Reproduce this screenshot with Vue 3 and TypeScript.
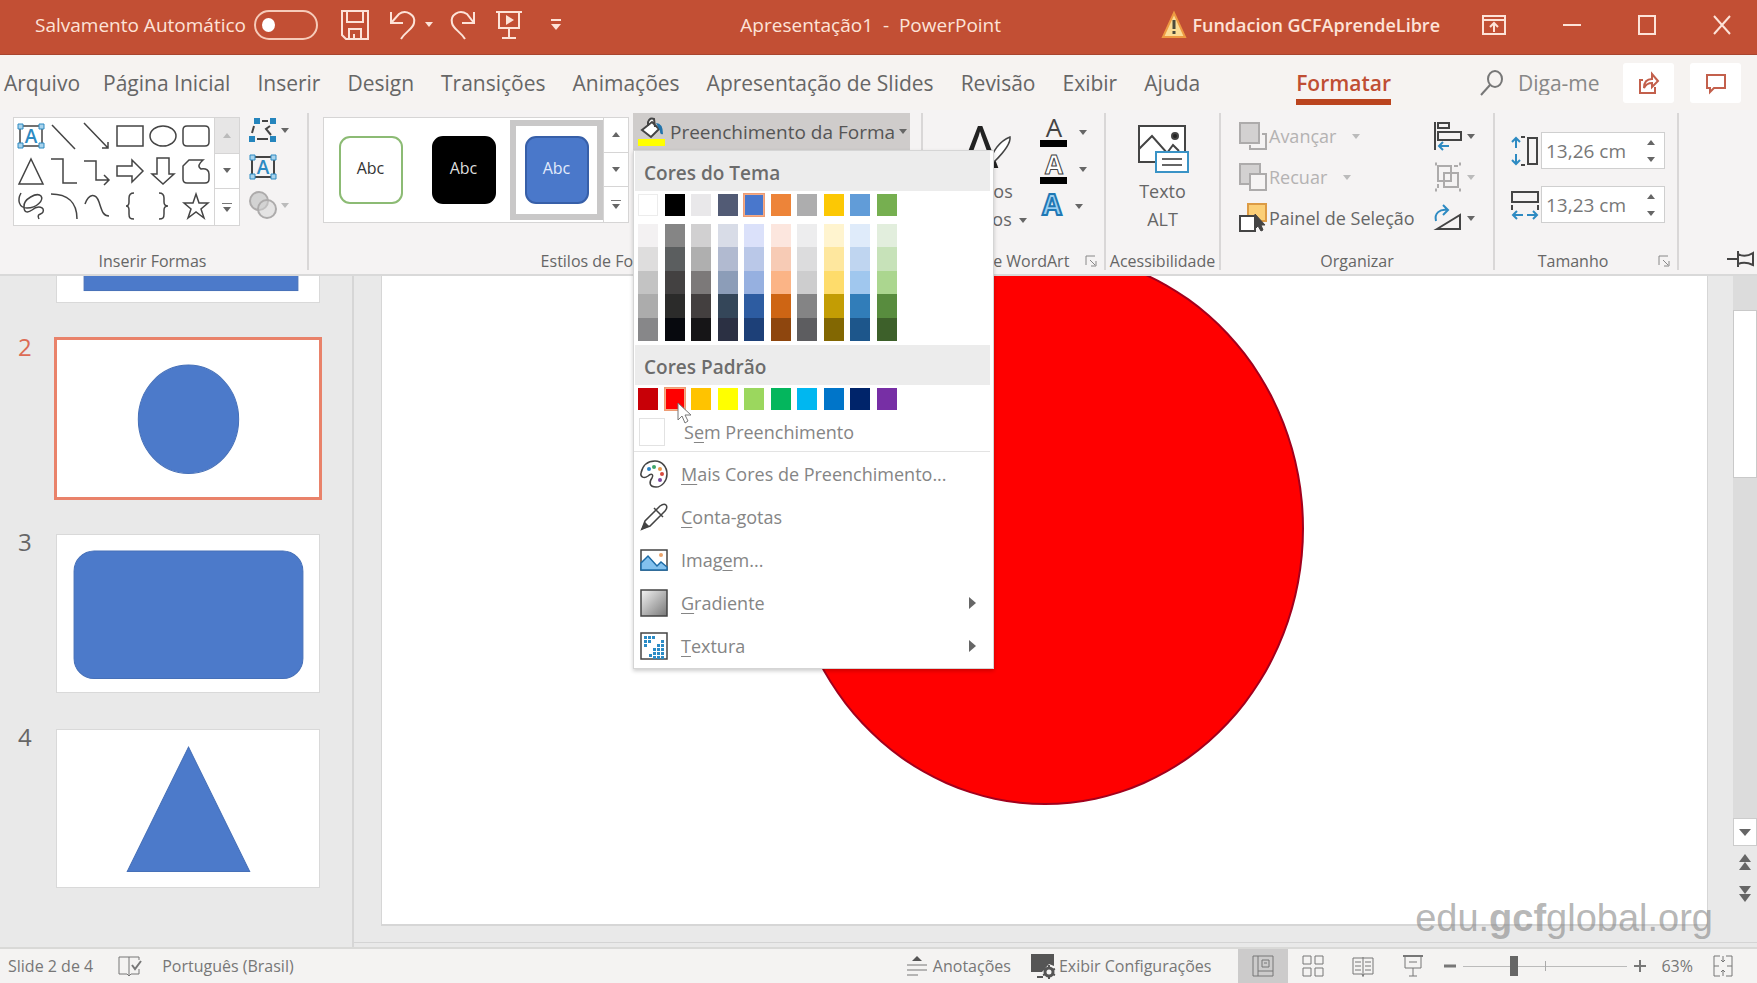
<script setup lang="ts">
import { ref } from 'vue'

interface Tab { name: string; active?: boolean }
interface MenuItem { id: string; pre: string; key: string; post: string; sub?: boolean }

const tabs: Tab[] = [
  { name: 'Arquivo' },
  { name: 'Página Inicial' },
  { name: 'Inserir' },
  { name: 'Design' },
  { name: 'Transições' },
  { name: 'Animações' },
  { name: 'Apresentação de Slides' },
  { name: 'Revisão' },
  { name: 'Exibir' },
  { name: 'Ajuda' },
  { name: 'Formatar', active: true },
]

const shapes: string[] = [
  '',
  'M2 3 25 27',
  'M1 1 25 26M25 20v6h-6',
  'M1 4h26v20H1z',
  'M1 14a13 10 0 1 0 26 0a13 10 0 1 0-26 0',
  'M5 4h18q4 0 4 4v12q0 4-4 4H5q-4 0-4-4V8q0-4 4-4z',
  'M14 2 26 27H2z',
  'M1 2h12v24h14',
  'M1 4h12v19h13M21 18l5 5-5 5',
  'M1 9h15V3l11 11-11 11v-6H1z',
  'M8 1h12v16h5L14 27 3 17h5z',
  'M7 3h14q-7 6-2 9 8-1 8 5v5q0 4-4 4H5q-4 0-4-4V9z',
  'M4 1C0 8 2 16 10 16c10 0 17-8 14-12C20 0 6 7 7 15c0 6 4 6 8 3 6-5 13-3 11 2-1 3-7 1-4 7',
  'M1 2c16 0 26 8 26 25',
  'M2 12C6 1 13 1 16 10s4 14 10 14',
  'M18 1c-4 0-5 2-5 5v4q0 4-3 4 3 0 3 4v4c0 4 1 5 5 5',
  'M10 1c4 0 5 2 5 5v4q0 4 4 4-4 0-4 4v4c0 4-1 5-5 5',
  'M14 2l3 9h9l-7 6 3 9-8-6-8 6 3-9-7-6h9z',
]

const themeColors: string[][] = [
  ['#ffffff', '#f3f1f2', '#dedddd', '#c3c3c3', '#acacac', '#878789'],
  ['#000000', '#858585', '#5b5e5f', '#434141', '#2b2b2a', '#07090e'],
  ['#e9e8ea', '#d1d0d1', '#afafaf', '#7c7979', '#433f3f', '#161517'],
  ['#525b75', '#d8dce7', '#b1bad0', '#8c9db8', '#344659', '#2b3043'],
  ['#4977cc', '#dbe1fa', '#bac8e8', '#96b0e0', '#2d5ca1', '#1d4078'],
  ['#ed8439', '#fce6de', '#f7cbb5', '#fbb486', '#ce6514', '#8e460e'],
  ['#adadae', '#ededee', '#dcdcdd', '#cdcdce', '#848485', '#5d5d60'],
  ['#fcc804', '#fff4cf', '#fee79e', '#fedc6b', '#c39d04', '#826702'],
  ['#619cd8', '#dfebfa', '#bfd5f0', '#a0c7ee', '#317db9', '#1d568b'],
  ['#76af50', '#e2eedd', '#c7e2b9', '#abd68f', '#588c3e', '#3d602a'],
]
const selectedTheme = 4

const standardColors: string[] = [
  '#c80007', '#ff0000', '#ffc300', '#ffff00', '#9bd75e',
  '#04b65d', '#00b7f0', '#0075c9', '#00246a', '#772fa5',
]
const selectedStandard = 1

const menuItems: MenuItem[] = [
  { id: 'palette', pre: '', key: 'M', post: 'ais Cores de Preenchimento...' },
  { id: 'dropper', pre: '', key: 'C', post: 'onta-gotas' },
  { id: 'image', pre: 'Imag', key: 'e', post: 'm...' },
  { id: 'gradient', pre: '', key: 'G', post: 'radiente', sub: true },
  { id: 'texture', pre: '', key: 'T', post: 'extura', sub: true },
]

const textureDots: number[][] = [
  [4, 4], [8, 4], [12, 4], [4, 8], [8, 8], [4, 12], [21, 8], [21, 12], [17, 12],
  [21, 16], [17, 16], [13, 16], [21, 20], [17, 20], [13, 20], [9, 22], [21, 24], [17, 24], [13, 24],
]

const slides: number[] = [1, 2, 3, 4]
const currentSlide = ref(2)
const autosave = ref(false)
const height = ref('13,26 cm')
const width = ref('13,23 cm')
const zoom = ref(30)
</script>

<template>
  <div class="app">
    <header class="titlebar">
      <label class="autosave">
        <span>Salvamento Automático</span>
        <input v-model="autosave" type="checkbox" role="switch" class="switch" />
      </label>
      <div class="quick">
        <button aria-label="Salvar">
          <svg width="28" height="30" viewBox="0 0 28 30"><path d="M1 1h26v28H5l-4-4zM6 1v11h16V1M8 29V19h12v10M13 29v-5" /></svg>
        </button>
        <button class="undo" aria-label="Desfazer">
          <svg width="28" height="30" viewBox="0 0 28 30"><path d="M2 2v11h12M2 13 10 4c7-5 17 1 15 9-1 6-8 8-13 16" /></svg>
          <i class="caret"></i>
        </button>
        <button aria-label="Refazer">
          <svg width="28" height="30" viewBox="0 0 28 30"><path d="M25 2v11H13M25 13 18 4C10-1 1 5 3 13c1 6 8 8 13 16" /></svg>
        </button>
        <button aria-label="Do começo">
          <svg width="28" height="30" viewBox="0 0 28 30"><path d="M1 2h26M4 2v16h20V2M14 18v10M7 28h14" /><path class="solid" d="M11 5l8 5-8 5z" /></svg>
        </button>
        <button class="more" aria-label="Personalizar">
          <svg width="10" height="12" viewBox="0 0 10 12"><path d="M0 1h10" /><path class="solid" d="M0 5h10l-5 6z" /></svg>
        </button>
      </div>
      <h1>Apresentação1&nbsp; -&nbsp; PowerPoint</h1>
      <div class="account">
        <svg width="24" height="28" viewBox="0 0 24 28"><path d="M12 2 23 26H1z" fill="#fbdc94" stroke="#ee9a42" stroke-width="2" /><path d="M12 9v9M12 20v3" stroke="#4b4a3c" stroke-width="3" /></svg>
        <span>Fundacion GCFAprendeLibre</span>
      </div>
      <div class="window">
        <button aria-label="Opções da faixa"><svg width="24" height="20" viewBox="0 0 24 20"><path d="M1 1h22v18H1zM1 5h22M12 17V8M8 12l4-4 4 4" /></svg></button>
        <button aria-label="Minimizar"><svg width="18" height="20" viewBox="0 0 18 20"><path d="M0 10h18" /></svg></button>
        <button aria-label="Maximizar"><svg width="18" height="20" viewBox="0 0 18 20"><path d="M1 1h16v18H1z" /></svg></button>
        <button aria-label="Fechar"><svg width="18" height="20" viewBox="0 0 18 20"><path d="M1 1l16 18M17 1 1 19" /></svg></button>
      </div>
    </header>

    <nav class="tabs">
      <button v-for="t in tabs" :key="t.name" class="tab" :class="{ active: t.active }">{{ t.name }}</button>
      <label class="search">
        <svg width="24" height="26" viewBox="0 0 24 26"><ellipse cx="15" cy="9" rx="7" ry="8" /><path d="M10 15 1 25" /></svg>
        <input type="text" placeholder="Diga-me" aria-label="Diga-me" />
      </label>
      <button class="card-btn" aria-label="Compartilhar">
        <svg width="20" height="22" viewBox="0 0 20 22"><path d="M4 8H1v13h15v-6M5 16c0-7 4-9 8-9V2l6 7-6 6v-4c-4 0-6 1-8 5z" /></svg>
      </button>
      <button class="card-btn" aria-label="Comentários">
        <svg width="20" height="22" viewBox="0 0 20 22"><path d="M1 3h18v13H8l-4 4v-4H1z" /></svg>
      </button>
    </nav>

    <section class="ribbon">
      <div class="group g-shapes">
        <div class="body">
          <div class="gallery">
            <div class="shape-grid">
              <button v-for="(d, i) in shapes" :key="i" :aria-label="'Forma ' + (i + 1)">
                <svg v-if="i === 0" width="28" height="28" viewBox="0 0 28 28">
                  <path d="M3 4h22v20H3z" /><text x="14" y="21" class="blue-a">A</text>
                  <path class="dots" d="M1 2h5v5H1zM22 2h5v5h-5zM1 21h5v5H1zM22 21h5v5h-5z" />
                </svg>
                <svg v-else width="28" height="28" viewBox="0 0 28 28"><path :d="d" /></svg>
              </button>
            </div>
            <div class="scroller">
              <button class="off" aria-label="Linha acima"><i class="caret up"></i></button>
              <button aria-label="Linha abaixo"><i class="caret"></i></button>
              <button class="all" aria-label="Mais formas"><i class="caret"></i></button>
            </div>
          </div>
          <div class="shape-side">
            <button aria-label="Editar forma">
              <svg width="28" height="28" viewBox="0 0 28 28"><path d="M13 5h6M5 10 3 17M8 23h11M21 10l-4 3 5 6" /><path class="solid-dots" d="M5 2h6v6H5zM21 2h6v6h-6zM0 20h6v6H0zM21 20h6v6h-6z" /></svg>
              <i class="caret"></i>
            </button>
            <button aria-label="Caixa de texto">
              <svg width="28" height="28" viewBox="0 0 28 28">
                <path d="M3 4h22v20H3z" /><text x="14" y="21" class="blue-a">A</text>
                <path class="dots" d="M1 2h5v5H1zM22 2h5v5h-5zM1 21h5v5H1zM22 21h5v5h-5z" />
              </svg>
            </button>
            <button class="off" aria-label="Mesclar formas">
              <svg width="28" height="30" viewBox="0 0 28 30"><circle cx="10" cy="11" r="9" fill="#d3d3d3" /><circle cx="18" cy="19" r="9" fill="#d3d3d380" /></svg>
              <i class="caret"></i>
            </button>
          </div>
        </div>
        <footer><span>Inserir Formas</span></footer>
      </div>

      <div class="group g-styles">
        <div class="body">
          <div class="gallery styles">
            <button class="style outline"><span>Abc</span></button>
            <button class="style black"><span>Abc</span></button>
            <button class="style blue"><span>Abc</span></button>
            <div class="scroller">
              <button aria-label="Linha acima"><i class="caret up"></i></button>
              <button aria-label="Linha abaixo"><i class="caret"></i></button>
              <button class="all" aria-label="Mais estilos"><i class="caret"></i></button>
            </div>
          </div>
          <div class="fill">
            <button class="fill-btn" aria-haspopup="menu" aria-expanded="true">
              <svg width="28" height="30" viewBox="0 0 28 30">
                <path fill="#ff0" stroke="none" d="M0 22h27v7H0z" />
                <path fill="#fff" d="M4 13 14 5l7 7-8 8zM10 9V5q2-5 6-3l1 8" />
                <path fill="#2374ab" stroke="none" d="M18 6q7 0 7 11-3 1-3-3z" />
              </svg>
              <span>Preenchimento da Forma</span>
              <i class="caret"></i>
            </button>
            <div class="menu" role="menu">
              <h2>Cores do Tema</h2>
              <div class="swatches top">
                <button v-for="(c, i) in themeColors" :key="i" class="swatch" :class="{ picked: i === selectedTheme, pale: i === 0 }" :style="{ background: c[0] }" :aria-label="'Cor do tema ' + (i + 1)"></button>
              </div>
              <div class="swatches tints">
                <div v-for="(c, i) in themeColors" :key="i" class="column">
                  <button v-for="t in c.slice(1)" :key="t" :style="{ background: t }" :aria-label="'Tom ' + t"></button>
                </div>
              </div>
              <h2>Cores Padrão</h2>
              <div class="swatches standard">
                <button v-for="(c, i) in standardColors" :key="c" class="swatch" :class="{ picked: i === selectedStandard }" :style="{ background: c }" :aria-label="'Cor padrão ' + (i + 1)"></button>
                <svg class="cursor" width="16" height="22" viewBox="0 0 16 22"><path d="M1 1v17l4-4 3 7 3-2-3-6h6z" fill="#fff" stroke="#777" /></svg>
              </div>
              <button class="none" role="menuitem"><i class="box"></i><span>S<u>e</u>m Preenchimento</span></button>
              <button v-for="m in menuItems" :key="m.id" class="item" role="menuitem">
                <svg v-if="m.id === 'palette'" width="28" height="28" viewBox="0 0 28 28">
                  <path d="M1 13C3 4 9 1 15 1c7 0 12 6 12 13S22 27 16 27c-7 0-7-5-4-9 2-4-1-5-4-2-4 3-8 1-7-3z" />
                  <g stroke="none"><circle cx="9" cy="9" r="2" fill="#2b83c5" /><circle cx="14" cy="7" r="2" fill="#3fa66a" /><circle cx="20" cy="9" r="2" fill="#e8984a" /><circle cx="22" cy="14" r="2" fill="#d94a3f" /><circle cx="20" cy="20" r="2" fill="#7d479f" /></g>
                </svg>
                <svg v-else-if="m.id === 'dropper'" width="28" height="28" viewBox="0 0 28 28">
                  <path d="M2 26 5 18 20 3q4-3 6-1t-1 6L10 23zM14 5l9 9" /><path fill="#444" d="M2 26l3-6 3 3z" />
                </svg>
                <svg v-else-if="m.id === 'image'" width="28" height="28" viewBox="0 0 28 28">
                  <path d="M1 4h26v20H1z" fill="#fff" /><path d="M1 17l7-7 9 10 4-4 6 5v3H1z" fill="#83c1ee" stroke="#1c6ba6" /><circle cx="21" cy="9" r="2" fill="#eba36b" stroke="none" />
                </svg>
                <svg v-else-if="m.id === 'gradient'" width="28" height="28" viewBox="0 0 28 28">
                  <defs><linearGradient id="gray" x1="0" y1="0" x2="1" y2="1"><stop offset="0" stop-color="#f4f4f4" /><stop offset="1" stop-color="#777" /></linearGradient></defs>
                  <path d="M1 1h26v26H1z" fill="url(#gray)" />
                </svg>
                <svg v-else width="28" height="28" viewBox="0 0 28 28">
                  <path d="M1 1h26v26H1z" fill="#fff" />
                  <rect v-for="(p, i) in textureDots" :key="i" :x="p[0]" :y="p[1]" width="3" height="3" fill="#2b8bc5" stroke="none" />
                </svg>
                <span>{{ m.pre }}<u>{{ m.key }}</u>{{ m.post }}</span>
                <i v-if="m.sub" class="arrow"></i>
              </button>
            </div>
          </div>
        </div>
        <footer><span>Estilos de Forma</span><i class="launcher-space"></i></footer>
      </div>

      <div class="group g-wordart">
        <div class="body">
          <button class="big quick-styles">
            <svg width="56" height="52" viewBox="0 0 56 52"><text x="22" y="45" class="big-a">A</text><path d="M32 40c2-12 10-22 20-26 1 7-9 18-15 24z" fill="#fff" /></svg>
            <span>Estilos</span>
            <span>Rápidos <i class="caret"></i></span>
          </button>
          <div class="letter-col">
            <button aria-label="Preenchimento do texto"><svg width="28" height="32" viewBox="0 0 28 32"><text x="14" y="21" class="letter">A</text><path fill="#000" stroke="none" d="M0 24h27v7H0z" /></svg><i class="caret"></i></button>
            <button aria-label="Contorno do texto"><svg width="28" height="32" viewBox="0 0 28 32"><text x="14" y="21" class="letter hollow">A</text><path fill="#000" stroke="none" d="M0 24h27v7H0z" /></svg><i class="caret"></i></button>
            <button aria-label="Efeitos de texto"><svg width="24" height="32" viewBox="0 0 24 32"><text x="12" y="25" class="letter glow">A</text></svg><i class="caret"></i></button>
          </div>
        </div>
        <footer>
          <span>Estilos de WordArt</span>
          <button class="launcher" aria-label="Formatar efeitos"><svg width="12" height="12" viewBox="0 0 12 12"><path d="M1 10V1h9M5 5l5 5M11 6v5H6" /></svg></button>
        </footer>
      </div>

      <div class="group g-alt">
        <div class="body">
          <button class="big">
            <svg width="52" height="52" viewBox="0 0 52 52">
              <path d="M2 3h46v36H2z" fill="#fff" /><path d="M2 26 15 13 30 30l6-8 6 6" /><circle cx="38" cy="13" r="3" fill="#222" />
              <path d="M19 29h32v20H19z" fill="#fff" stroke="#3a93c6" /><path d="M25 36h20M25 42h20" stroke="#666" />
            </svg>
            <span>Texto</span>
            <span>ALT</span>
          </button>
        </div>
        <footer><span>Acessibilidade</span></footer>
      </div>

      <div class="group g-arrange">
        <div class="body">
          <div class="rows">
            <button class="off"><svg width="28" height="30" viewBox="0 0 28 30"><path d="M1 2h19v20H1z" fill="#d3d1d1" /><path d="M23 13h4v15H11v-4" /></svg><span>Avançar</span><i class="caret"></i></button>
            <button class="off"><svg width="28" height="30" viewBox="0 0 28 30"><path d="M1 2h20v20H1z" fill="#d3d1d1" /><path d="M11 12h16v16H11z" fill="#f6f4f4" /></svg><span>Recuar</span><i class="caret"></i></button>
            <button><svg width="28" height="30" viewBox="0 0 28 30"><path d="M9 1h18v17H9z" fill="#fbcf77" stroke="#dc9b45" /><path d="M1 13h15v15H1z" fill="#fff" /><path d="M16 11v15l3-3 3 5 2-1-2-5h4z" fill="#444" stroke-width="1" /></svg><span>Painel de Seleção</span></button>
          </div>
          <div class="rows tools">
            <button aria-label="Alinhar"><svg width="28" height="30" viewBox="0 0 28 30"><path d="M1 1v28M4 2h11v5H4zM4 11h23v8H4z" /><path d="M15 25H5M9 21l-4 4 4 4" stroke="#2d8ac2" /></svg><i class="caret"></i></button>
            <button class="off" aria-label="Agrupar"><svg width="28" height="30" viewBox="0 0 28 30"><path d="M4 4h13v15H4zM10 11h14v14H10zM20 4h4M4 22v4" /><path d="M1 2h2M25 2h2M1 28h2M25 28h2" stroke-width="3" /></svg><i class="caret"></i></button>
            <button aria-label="Girar"><svg width="28" height="30" viewBox="0 0 28 30"><path d="M3 26 26 12v14z" /><path d="M2 18C0 10 6 6 13 7M9 2l5 5-5 5" stroke="#2d8ac2" /></svg><i class="caret"></i></button>
          </div>
        </div>
        <footer><span>Organizar</span></footer>
      </div>

      <div class="group g-size">
        <div class="body">
          <label class="size">
            <svg width="28" height="30" viewBox="0 0 28 30"><path d="M17 2h9v26h-9zM10 1h4M10 29h4" /><path d="M5 12V2M1 6l4-4 4 4M5 18v10M1 24l4 4 4-4" stroke="#2d8ac2" /></svg>
            <span class="field"><input v-model="height" type="text" aria-label="Altura" /><span class="spin"><i class="caret up"></i><i class="caret"></i></span></span>
          </label>
          <label class="size">
            <svg width="28" height="30" viewBox="0 0 28 30"><path d="M1 2h26v10H1zM1 15v5M27 15v5" /><path d="M12 25H2M6 21l-4 4 4 4M16 25h10M22 21l4 4-4 4" stroke="#2d8ac2" /></svg>
            <span class="field"><input v-model="width" type="text" aria-label="Largura" /><span class="spin"><i class="caret up"></i><i class="caret"></i></span></span>
          </label>
        </div>
        <footer>
          <span>Tamanho</span>
          <button class="launcher" aria-label="Formatar tamanho"><svg width="12" height="12" viewBox="0 0 12 12"><path d="M1 10V1h9M5 5l5 5M11 6v5H6" /></svg></button>
        </footer>
      </div>

      <div class="pin">
        <button aria-label="Fixar"><svg width="28" height="18" viewBox="0 0 28 18"><path d="M0 9h11M11 1v16M11 4q7 4 15-1v12q-8-4-15-1" /></svg></button>
      </div>
    </section>

    <main class="work">
      <aside class="thumbs">
        <button v-for="n in slides" :key="n" class="thumb" :class="{ current: n === currentSlide }" :aria-label="'Slide ' + n" @click="currentSlide = n">
          <span v-if="n > 1" class="num">{{ n }}</span>
          <span class="page">
            <svg viewBox="0 0 263 159">
              <rect v-if="n === 1" x="28" y="14" width="213" height="132" />
              <ellipse v-else-if="n === 2" cx="132" cy="80" rx="50" ry="54" />
              <rect v-else-if="n === 3" x="18" y="17" width="228" height="127" rx="20" />
              <path v-else d="M132 18 193 142H71z" />
            </svg>
          </span>
        </button>
      </aside>
      <section class="stage">
        <div class="slide"><div class="ellipse"></div></div>
        <div class="scrollbar">
          <i class="thumb-bar"></i>
          <button class="down" aria-label="Rolar para baixo"><i class="caret"></i></button>
          <button aria-label="Slide anterior"><svg width="12" height="16" viewBox="0 0 12 16"><path d="M6 0l6 8H0zM6 8l6 8H0z" /></svg></button>
          <button aria-label="Próximo slide"><svg width="12" height="16" viewBox="0 0 12 16"><path d="M6 16 0 8h12zM6 8 0 0h12z" /></svg></button>
        </div>
        <div class="watermark">edu.<b>gcf</b>global.org</div>
      </section>
    </main>

    <footer class="status">
      <span class="count">Slide 2 de 4</span>
      <button aria-label="Ortografia"><svg width="26" height="24" viewBox="0 0 26 24"><path d="M12 3v18M12 3H2v17h8l2 2 2-2h8v-5M12 3h10v3" /><path d="M15 11l3 4 6-8" stroke-width="2" /></svg></button>
      <button class="lang">Português (Brasil)</button>
      <button class="notes"><svg width="20" height="24" viewBox="0 0 20 24"><path d="M0 11h20M0 16h20M0 21h11" /><path fill="#555" stroke="none" d="M10 2l5 5H5z" /></svg><span>Anotações</span></button>
      <button class="display"><svg width="26" height="28" viewBox="0 0 26 28"><path fill="#555" stroke="none" d="M0 2h23v12l-5-2-7 8H0zM6 24h6v2H6z" /><g stroke="#555"><circle cx="18" cy="20" r="4" stroke-width="3" /><path d="M18 13v3M18 24v3M12 17l3 1M21 22l3 1M12 23l3-1M21 18l3-1" stroke-width="2" /></g></svg><span>Exibir Configurações</span></button>
      <div class="views">
        <button class="on" aria-label="Normal"><svg width="22" height="22" viewBox="0 0 22 22"><path d="M1 1h20v20H1zM6 1v20M6 16h15M10 5h7v7h-7zM12 8h3" /></svg></button>
        <button aria-label="Classificação"><svg width="22" height="22" viewBox="0 0 22 22"><path d="M1 1h8v8H1zM13 1h8v8h-8zM1 13h8v8H1zM13 13h8v8h-8z" /></svg></button>
        <button aria-label="Leitura"><svg width="22" height="22" viewBox="0 0 22 22"><path d="M11 2v20M11 3H1v16h9l1 2 1-2h9V3zM3 7h6M3 11h6M3 15h6M13 7h6M13 11h6M13 15h6" /></svg></button>
        <button aria-label="Apresentação"><svg width="22" height="24" viewBox="0 0 22 24"><path d="M1 2h20" stroke-width="2" /><path d="M3 2v12h16V2M7 8h8M11 14v8M7 22h8" /></svg></button>
      </div>
      <div class="zoom">
        <button aria-label="Menos zoom"><svg width="14" height="14" viewBox="0 0 14 14"><path d="M1 7h12" stroke-width="3" /></svg></button>
        <input v-model="zoom" type="range" min="0" max="100" aria-label="Zoom" />
        <button aria-label="Mais zoom"><svg width="14" height="14" viewBox="0 0 14 14"><path d="M1 7h12M7 1v12" stroke-width="2" /></svg></button>
        <button class="pct">63%</button>
        <button aria-label="Ajustar"><svg width="20" height="22" viewBox="0 0 20 22"><path d="M7 1H1v20h6M13 1h6v20h-6M10 1v6M8 5l2 2 2-2M10 21v-6M8 17l2-2 2 2M1 11h5M14 11h5" /></svg></button>
      </div>
    </footer>
  </div>
</template>

<style>
body {
  background: #e9e9e9;
}
</style>

<style scoped>
.app {
  min-height: 100vh;
  display: flex;
  flex-direction: column;
  font-family: "Open Sans", "Noto Sans", sans-serif;
  font-size: 18px;
  line-height: 24px;
  color: #666;
  overflow: hidden;
}
.app * {
  box-sizing: border-box;
}
button {
  font: inherit;
  color: inherit;
  background: none;
  border: 0;
  padding: 0;
  margin: 0;
  display: flex;
  align-items: center;
  white-space: nowrap;
}
input {
  font: inherit;
  color: inherit;
  border: 0;
  background: none;
  padding: 0;
  margin: 0;
  min-width: 0;
  outline: 0;
}
svg {
  display: block;
  flex: none;
  fill: none;
  stroke: #444;
  stroke-width: 2;
  overflow: visible;
}
.caret {
  flex: none;
  border: 4px solid transparent;
  border-top: 5px solid #666;
  border-bottom: 0;
}
.caret.up {
  border-top: 0;
  border-bottom: 5px solid #666;
}

/* Title bar */
.titlebar {
  height: 55px;
  padding: 0 26px 5px 35px;
  display: flex;
  align-items: center;
  background: #c24f34;
  border-bottom: 1px solid #a8452f;
  color: #fde3d8;
}
.titlebar svg {
  stroke: #fde3d8;
}
.autosave {
  display: flex;
  align-items: center;
  gap: 8px;
  font-size: 19px;
}
.switch {
  appearance: none;
  width: 64px;
  height: 30px;
  border: 2px solid #f6cbb9;
  border-radius: 15px;
  display: flex;
  align-items: center;
  padding-left: 6px;
}
.switch::before {
  content: "";
  width: 13px;
  height: 14px;
  border-radius: 50%;
  background: #fff;
}
.quick {
  display: flex;
  align-items: center;
  margin-left: 23px;
  gap: 20px;
}
.quick .solid {
  fill: #fde3d8;
  stroke: none;
}
.quick .caret {
  border-top-color: #fde3d8;
}
.undo {
  gap: 8px;
  margin-right: -4px;
}
.quick button:nth-child(3) {
  margin-right: -2px;
}
.more {
  margin-left: 8px;
}
h1 {
  flex: 1;
  margin: 0;
  padding-left: 18px;
  text-align: center;
  font-size: 19px;
  font-weight: 400;
}
.account {
  display: flex;
  align-items: center;
  gap: 6px;
  font-weight: 600;
}
.window {
  display: flex;
  align-items: center;
  gap: 57px;
  margin-left: 42px;
}

/* Tabs */
.tabs {
  height: 55px;
  padding: 0 16px 0 4px;
  display: flex;
  align-items: center;
  gap: 27px;
  background: #f6f3f1;
  font-size: 21px;
}
.tab:first-child {
  margin-right: -4px;
}
.tab.active {
  margin-left: 69px;
  color: #bf4e33;
  font-weight: 600;
  height: 44px;
  border-bottom: 6px solid #bb441d;
  padding-top: 6px;
}
.search {
  display: flex;
  align-items: center;
  gap: 14px;
  margin: 0 -3px 0 auto;
}
.search input {
  width: 81px;
}
.search svg {
  stroke: #777;
}
.search input::placeholder {
  color: #888;
  opacity: 1;
}
.card-btn {
  width: 51px;
  height: 40px;
  justify-content: center;
  background: #fff;
  border-radius: 3px;
  margin-right: -11px;
}
.card-btn:last-child {
  margin-right: 0;
}
.card-btn svg {
  stroke: #c3604c;
}

/* Ribbon */
.ribbon {
  height: 166px;
  padding: 3px 0 4px;
  display: flex;
  background: #f5f3f3;
  border-bottom: 2px solid #d9d9d9;
  position: relative;
  z-index: 2;
}
.group {
  display: flex;
  flex-direction: column;
  border-right: 2px solid #d9d7d7;
}
.body {
  flex: 1;
  display: flex;
  align-items: flex-start;
}
.group footer {
  display: flex;
  align-items: center;
  height: 18px;
  font-size: 16px;
  line-height: 18px;
}
.group footer span {
  flex: 1;
  text-align: center;
  white-space: nowrap;
}
.launcher,
.launcher-space {
  width: 26px;
  justify-content: center;
}
.launcher svg {
  stroke: #888;
  stroke-width: 1;
}
.off {
  color: #b4b2b2;
}
.off svg {
  stroke: #adabab;
}
.off .caret {
  border-top-color: #bbb;
  border-bottom-color: #bbb;
}
.gallery {
  display: flex;
  height: 109px;
  margin-top: 4px;
  background: #fff;
  border: 1px solid #d6d5d5;
}
.scroller {
  width: 25px;
  display: grid;
  grid-template-rows: repeat(3, 1fr);
}
.scroller button {
  flex-direction: column;
  justify-content: center;
  gap: 3px;
  border-left: 1px solid #d6d5d5;
  border-bottom: 1px solid #d6d5d5;
}
.scroller button:last-child {
  border-bottom: 0;
}
.scroller .off {
  background: #e7e6e6;
}
.all::before {
  content: "";
  width: 10px;
  border-top: 1px solid #777;
}

.g-shapes {
  width: 309px;
}
.g-shapes .body {
  padding-left: 13px;
  gap: 9px;
}
.g-shapes footer {
  padding-right: 2px;
}
.shape-grid {
  display: grid;
  grid-template-columns: repeat(6, 33px);
  grid-template-rows: repeat(3, 35px);
  padding-right: 2px;
}
.shape-grid button {
  justify-content: center;
}
.shape-grid svg {
  stroke-width: 1.5;
}
svg text.blue-a {
  font: 600 19px "Open Sans", sans-serif;
  text-anchor: middle;
  fill: #2d8ac2;
  stroke: none;
}
.dots {
  fill: #a9d3ec;
  stroke: #2d8ac2;
  stroke-width: 1;
}
.solid-dots {
  fill: #2585bd;
  stroke: none;
}
.shape-side {
  display: flex;
  flex-direction: column;
  gap: 9px;
  padding-top: 3px;
}
.shape-side button {
  gap: 4px;
}

.g-styles {
  flex: 1;
}
.g-styles .body {
  padding-left: 14px;
  gap: 4px;
}
.styles {
  height: 106px;
}
.style {
  width: 93px;
  margin: 2px 0;
  justify-content: center;
  font-size: 16px;
  color: #333;
}
.style span {
  width: 64px;
  height: 68px;
  border-radius: 11px;
  line-height: 60px;
  border: 2px solid #8cbb74;
}
.black span {
  background: #000;
  border-color: #000;
  color: #ddd;
}
.blue {
  border: 6px solid #c9c8c8;
}
.blue span {
  background: #4a78ca;
  border-color: #375fa8;
  color: #e3ebfb;
}
.fill {
  position: relative;
}
.fill-btn {
  width: 277px;
  height: 37px;
  padding: 0 5px;
  gap: 4px;
  background: #cfcccb;
  color: #555;
  font-size: 19px;
}
.fill-btn .caret {
  margin-left: auto;
}

/* Fill menu */
.menu {
  position: absolute;
  top: 100%;
  left: 0;
  width: 361px;
  height: 519px;
  background: #fff;
  border: 1px solid #d5d5d5;
  box-shadow: 0 2px 4px #0003;
  color: #858585;
}
.menu h2 {
  margin: 0 3px 0 1px;
  height: 40px;
  padding-left: 9px;
  background: #ececec;
  color: #6c6c6c;
  font-size: 19px;
  font-weight: 600;
  line-height: 44px;
}
.swatches {
  width: 259px;
  margin-left: 4px;
  display: flex;
  justify-content: space-between;
}
.swatch {
  width: 20px;
  height: 22px;
}
.pale {
  border: 1px solid #ececec;
}
.picked {
  outline: 1px solid #ee9c74;
  border: 1px solid #f3ab86;
}
.top {
  margin-top: 3px;
}
.tints {
  height: 117px;
  margin-top: 8px;
  margin-bottom: 4px;
}
.column {
  width: 20px;
  display: grid;
  grid-template-rows: repeat(5, 1fr);
}
.standard {
  margin-top: 3px;
  position: relative;
}
.cursor {
  position: absolute;
  left: 39px;
  top: 14px;
  stroke-width: 1;
}
.none {
  width: 356px;
  height: 42px;
  padding: 3px 0 0 5px;
  gap: 19px;
  border-bottom: 1px solid #e3e3e3;
}
.box {
  width: 26px;
  height: 28px;
  border: 1px solid #e2e2e2;
}
.item {
  width: 100%;
  height: 43px;
  padding: 0 17px 0 6px;
  gap: 13px;
}
.item svg {
  stroke-width: 1.5;
}
.item u,
.none u {
  text-underline-offset: 3px;
}
.arrow {
  margin-left: auto;
  border: 6px solid transparent;
  border-left: 7px solid #666;
  border-right: 0;
}

.big {
  flex-direction: column;
  line-height: 28px;
}
.big svg {
  margin-bottom: 2px;
}
.g-wordart {
  width: 183px;
}
.g-wordart .body {
  padding-left: 31px;
}
.quick-styles {
  width: 64px;
  margin-top: 10px;
}
.quick-styles svg {
  stroke-width: 1.5;
}
.quick-styles .caret {
  display: inline-block;
  margin: 0 0 3px 3px;
}
svg text.big-a {
  font: 58px "Open Sans", sans-serif;
  text-anchor: middle;
  fill: #222;
  stroke: none;
}
.letter-col {
  margin-left: 22px;
  padding-top: 3px;
  display: flex;
  flex-direction: column;
  gap: 5px;
}
.letter-col button {
  gap: 11px;
}
svg text.letter {
  font: 26px "Open Sans", sans-serif;
  text-anchor: middle;
  fill: #444;
  stroke: none;
}
svg text.hollow {
  font-weight: 700;
  fill: #fff;
  stroke: #444;
  stroke-width: 1;
}
svg text.glow {
  font-size: 28px;
  font-weight: 700;
  fill: #9bd0f2;
  stroke: #1f78b4;
  stroke-width: 2;
}

.g-alt {
  width: 115px;
}
.g-alt .body {
  justify-content: center;
  padding-top: 10px;
}
.g-arrange {
  width: 274px;
}
.g-arrange .body {
  justify-content: space-between;
  padding: 8px 18px 0;
}
.rows {
  display: flex;
  flex-direction: column;
  gap: 11px;
}
.rows button {
  gap: 2px;
}
.rows .off span {
  margin-right: 14px;
}
.tools button {
  gap: 5px;
}
.g-size {
  width: 184px;
}
.g-size .body {
  flex-direction: column;
  gap: 17px;
  padding: 19px 12px 0 16px;
  align-items: stretch;
}
.size {
  display: flex;
  align-items: center;
  gap: 2px;
}
.field {
  flex: 1;
  min-width: 0;
  height: 37px;
  display: flex;
  background: #fff;
  border: 1px solid #cfcfcf;
  padding: 0 9px 0 4px;
  font-size: 19px;
}
.field input {
  flex: 1;
  width: 0;
  color: #777;
}
.spin {
  display: flex;
  flex-direction: column;
  justify-content: center;
  gap: 12px;
}
.pin {
  width: 78px;
  display: flex;
  align-items: flex-end;
  justify-content: flex-end;
  padding: 0 2px 2px 0;
}

/* Work area */
.work {
  flex: 1 1 0;
  min-height: 0;
  display: flex;
  background: #e9e9e9;
}
.thumbs {
  width: 354px;
  display: flex;
  flex-direction: column;
  justify-content: flex-end;
  gap: 36px;
  padding: 0 32px 60px 18px;
  border-right: 2px solid #d6d6d6;
  height: calc(100vh - 311px);
  overflow: hidden;
}
.thumb {
  align-items: flex-start;
  flex: none;
}
.num {
  text-align: left;
  font-size: 24px;
  line-height: 16px;
}
.page {
  width: 264px;
  height: 159px;
  margin-left: auto;
  background: #fff;
  outline: 1px solid #d9d9d9;
  outline-offset: -1px;
}
.page svg {
  fill: #4c7aca;
  stroke: #4670b8;
  stroke-width: 1;
}
.current .num {
  color: #dc6b55;
}
.current .page {
  outline: 3px solid #e9826a;
}
.stage {
  flex: 1;
  position: relative;
  display: flex;
  justify-content: space-between;
  padding-left: 27px;
  border-bottom: 1px solid #d4d4d4;
  margin-bottom: 4px;
  overflow: hidden;
}
.slide {
  flex: 1;
  margin-bottom: 16px;
  display: flex;
  justify-content: center;
  align-items: flex-start;
  background: #fff;
  border: solid #d6d6d6;
  border-width: 0 1px 2px;
}
.ellipse {
  width: 518px;
  height: 553px;
  margin-top: -24px;
  border-radius: 50%;
  background: #f00;
  border: 2px solid #a3001c;
}
.scrollbar {
  width: 24px;
  margin-left: 25px;
  display: flex;
  flex-direction: column;
  align-items: center;
  padding-bottom: 40px;
  background: linear-gradient(#dcdcdc 542px, #e9e9e9 542px);
}
.scrollbar svg {
  fill: #666;
  stroke: none;
}
.thumb-bar {
  width: 24px;
  height: 168px;
  margin-top: 34px;
  margin-bottom: auto;
  background: #fff;
  border: 1px solid #c9c9c9;
}
.scrollbar .down {
  width: 24px;
  height: 28px;
  background: #fff;
  border: 1px solid #ccc;
  justify-content: center;
  margin-bottom: 8px;
}
.scrollbar .down .caret {
  border-width: 7px 6px 0;
}
.scrollbar button:nth-of-type(2) {
  margin-bottom: 16px;
}
.watermark {
  position: absolute;
  right: 44px;
  bottom: 2px;
  font-family: "Liberation Sans", Arial, sans-serif;
  font-size: 38px;
  line-height: 44px;
  color: #8888889c;
}

/* Status bar */
.status {
  height: 36px;
  border-top: 2px solid #d9d9d7;
  display: flex;
  align-items: center;
  padding: 0 24px 0 8px;
  background: #f4f3f2;
  font-size: 16px;
  color: #777;
}
.status svg {
  stroke: #777;
  stroke-width: 1;
}
.count {
  margin-right: 24px;
}
.lang {
  margin-left: 19px;
}
.notes {
  margin-left: auto;
  gap: 6px;
}
.display {
  margin-left: 20px;
  gap: 2px;
}
.views {
  display: flex;
  margin-left: 27px;
  height: 100%;
}
.views button {
  width: 50px;
  justify-content: center;
}
.views .on {
  background: #cccbcb;
}
.zoom {
  display: flex;
  align-items: center;
  margin-left: 5px;
  gap: 6px;
}
.zoom input {
  appearance: none;
  width: 164px;
  height: 20px;
  background:
    linear-gradient(#aaa, #aaa) center / 1px 10px no-repeat,
    linear-gradient(#bbb, #bbb) center / 100% 1px no-repeat;
}
.zoom input::-webkit-slider-thumb {
  appearance: none;
  width: 8px;
  height: 20px;
  background: #666;
}
.pct {
  margin: 0 14px 0 8px;
}
</style>
